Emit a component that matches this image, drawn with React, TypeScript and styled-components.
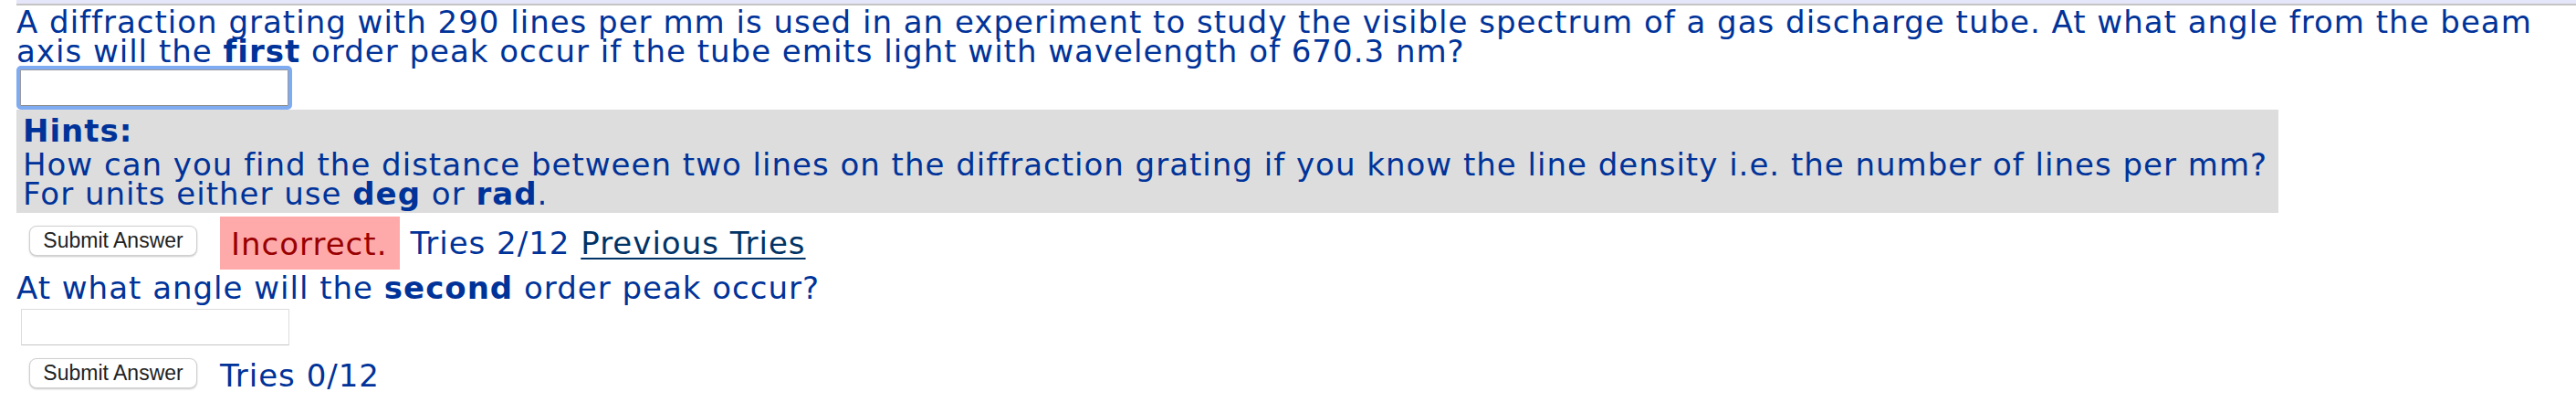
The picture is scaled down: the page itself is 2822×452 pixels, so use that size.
import React from "react";
import styled, { createGlobalStyle } from "styled-components";

const Global = createGlobalStyle`
  html, body { margin: 0; padding: 0; background: #ffffff; }
  body { font-family: "DejaVu Sans", Verdana, sans-serif; }
`;

const Page = styled.div`
  padding: 0 0 0 18px;
  color: #003399;
  font-family: "DejaVu Sans", Verdana, sans-serif;
  font-size: 34px;
  letter-spacing: 1px;
  line-height: 32px;
`;

const TopStrip = styled.div`
  height: 4px;
  background: #e6e6fa;
  border-bottom: 2px solid #c4c4c4;
  margin-bottom: 2px;
`;

const Question = styled.div<{ $top?: number }>`
  white-space: nowrap;
  margin-top: ${(p) => p.$top ?? 0}px;
`;

const AnswerInput = styled.input<{ $focused?: boolean }>`
  display: block;
  box-sizing: border-box;
  width: 294px;
  height: 40px;
  margin: ${(p) => (p.$focused ? "4px 0 4px 4px" : "7px 0 0 5px")};
  padding: 0 6px;
  background: #ffffff;
  border: 1px solid ${(p) => (p.$focused ? "#9a9a9a" : "#dcdcdc")};
  border-bottom-color: ${(p) => (p.$focused ? "#8a8a8a" : "#c4c4c4")};
  border-radius: 1px;
  outline: ${(p) => (p.$focused ? "4px solid #7fabf2" : "none")};
  outline-offset: 0;
  font-size: 28px;
`;

const HintBox = styled.div`
  width: fit-content;
  background: #dddddd;
  padding: 7px 12px 5px 7px;
  white-space: nowrap;
`;

const HintTitle = styled.div`
  font-weight: bold;
  margin-bottom: 5px;
`;

const Row = styled.div<{ $top: number }>`
  display: flex;
  align-items: center;
  margin-top: ${(p) => p.$top}px;
  min-height: 36px;
`;

const SubmitButton = styled.button`
  box-sizing: border-box;
  width: 184px;
  height: 33px;
  margin: 0 25px 5px 14px;
  padding: 0;
  background: #ffffff;
  border: 1px solid #d0d0d0;
  border-radius: 8px;
  box-shadow: 0 1px 2px rgba(0, 0, 0, 0.22);
  color: #222222;
  font-family: "Liberation Sans", Arial, sans-serif;
  font-size: 23px;
  letter-spacing: 0;
  line-height: 31px;
`;

const Badge = styled.span`
  display: inline-block;
  background: #ffaaaa;
  color: #990000;
  padding: 14px 14px 12px 12px;
  margin-right: 11px;
`;

const Tries = styled.span`
  white-space: pre;
`;

const PrevLink = styled.a`
  color: #003366;
  text-decoration: underline;
  text-underline-offset: 4px;
  text-decoration-thickness: 2px;
  cursor: pointer;
`;

export default function App() {
  return (
    <>
      <Global />
      <Page>
        <TopStrip />
        <Question>
          A diffraction grating with 290 lines per mm is used in an experiment to study the visible spectrum of a gas
          discharge tube. At what angle from the beam
          <br />
          axis will the <b>first</b> order peak occur if the tube emits light with wavelength of 670.3 nm?
        </Question>
        <AnswerInput $focused type="text" />
        <HintBox>
          <HintTitle>Hints:</HintTitle>
          How can you find the distance between two lines on the diffraction grating if you know the line density
          i.e. the number of lines per mm?
          <br />
          For units either use <b>deg</b> or <b>rad</b>.
        </HintBox>
        <Row $top={4}>
          <SubmitButton type="button">Submit Answer</SubmitButton>
          <Badge>Incorrect.</Badge>
          <Tries>Tries 2/12 </Tries>
          <PrevLink>Previous Tries</PrevLink>
        </Row>
        <Question $top={4}>
          At what angle will the <b>second</b> order peak occur?
        </Question>
        <AnswerInput type="text" />
        <Row $top={14}>
          <SubmitButton type="button">Submit Answer</SubmitButton>
          <Tries>Tries 0/12</Tries>
        </Row>
      </Page>
    </>
  );
}
